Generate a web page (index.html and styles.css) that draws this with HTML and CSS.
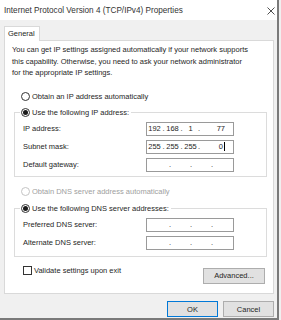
FILE: index.html
```html
<!DOCTYPE html>
<html>
<head>
<meta charset="utf-8">
<link rel="stylesheet" href="styles.css">
</head>
<body>
<div class="window">
  <div class="titlebar">
    <span class="title">Internet Protocol Version 4 (TCP/IPv4) Properties</span>
    <svg class="close" viewBox="0 0 8 8"><path d="M0.5 0.5 L7.5 7.5 M7.5 0.5 L0.5 7.5" stroke="#222" stroke-width="0.8" fill="none"/></svg>
  </div>
  <div class="main">
    <div class="tabs"><div class="tab">General</div></div>
    <div class="panel">
      <p class="intro">You can get IP settings assigned automatically if your network supports<br>this capability. Otherwise, you need to ask your network administrator<br>for the appropriate IP settings.</p>
      <div class="opt"><span class="radio"></span>Obtain an IP address automatically</div>
      <fieldset class="group">
        <legend><span class="leg"><span class="radio on"></span>Use the following IP address:</span></legend>
        <div class="rows">
          <span class="lbl">IP address:</span>
          <div class="ip"><span class="oct">192</span><span class="dot">.</span><span class="oct">168</span><span class="dot">.</span><span class="oct">1</span><span class="dot d3">.</span><span class="oct last">77</span></div>
          <span class="lbl">Subnet mask:</span>
          <div class="ip"><span class="oct">255</span><span class="dot">.</span><span class="oct">255</span><span class="dot">.</span><span class="oct">255</span><span class="dot d3">.</span><span class="oct last">0<span class="caret"></span></span></div>
          <span class="lbl">Default gateway:</span>
          <div class="ip blank"><span class="dot">.</span><span class="dot">.</span><span class="dot">.</span></div>
        </div>
      </fieldset>
      <div class="opt dns-opt disabled"><span class="radio"></span>Obtain DNS server address automatically</div>
      <fieldset class="group dns">
        <legend><span class="leg"><span class="radio on"></span>Use the following DNS server addresses:</span></legend>
        <div class="rows">
          <span class="lbl">Preferred DNS server:</span>
          <div class="ip blank"><span class="dot">.</span><span class="dot">.</span><span class="dot">.</span></div>
          <span class="lbl">Alternate DNS server:</span>
          <div class="ip blank"><span class="dot">.</span><span class="dot">.</span><span class="dot">.</span></div>
        </div>
      </fieldset>
      <div class="foot">
        <div class="check"><span class="box"></span>Validate settings upon exit</div>
        <button class="btn adv">Advanced...</button>
      </div>
    </div>
    <div class="actions">
      <button class="btn ok">OK</button>
      <button class="btn cancel">Cancel</button>
    </div>
  </div>
</div>
</body>
</html>
```
FILE: styles.css
```css
* { box-sizing: border-box; }
html, body { margin: 0; padding: 0; }
body {
  background: #f0f0f0;
  font-family: "Liberation Sans", Arial, sans-serif;
  font-size: 7.5px;
  color: #262626;
}
.window {
  width: 279px;
  height: 320px;
  background: #f0f0f0;
  border-right: 2px solid #7a7a7a;
  border-bottom: 2px solid #7a7a7a;
}
.titlebar {
  height: 20px;
  background: #fff;
  display: flex;
  align-items: center;
  justify-content: space-between;
  padding: 1px 2px 0 4px;
}
.title { font-size: 8.2px; color: #333; }
.close { width: 8px; height: 8px; display: block; }
.main { padding: 6px 3px 0 4px; }
.tabs { height: 14px; display: flex; }
.tab {
  position: relative;
  z-index: 1;
  width: 36px;
  height: 15px;
  background: #fff;
  border: 1px solid #d9d9d9;
  border-bottom: 0;
  padding-left: 3px;
  line-height: 13px;
}
.panel {
  height: 254px;
  background: #fff;
  border: 1px solid #d9d9d9;
}
.intro { margin: 3px 0 0 7px; line-height: 11.5px; }
.opt {
  margin: 12px 0 0 16px;
  display: flex;
  align-items: center;
  height: 12px;
}
.radio {
  flex: none;
  width: 9px;
  height: 9px;
  border: 1px solid #333;
  border-radius: 50%;
  margin-right: 2px;
  background: #fff;
}
.radio.on::after {
  content: "";
  display: block;
  width: 5px;
  height: 5px;
  margin: 1px;
  border-radius: 50%;
  background: #1a1a1a;
}
.disabled { color: #a0a0a0; }
.disabled .radio { border-color: #c4c4c4; }
.group {
  margin: 4px 0 0 9px;
  width: 253px;
  min-width: 0;
  border: 1px solid #dcdcdc;
  padding: 0 0 4px 0;
}
.group legend { margin-left: 5px; padding: 0 2px 0 1px; }
.leg { display: flex; align-items: center; height: 12px; }
.rows {
  display: grid;
  grid-template-columns: 123px 88px;
  row-gap: 4px;
  align-items: center;
  padding: 3px 0 0 8px;
}
.ip {
  height: 14px;
  border: 1px solid #9a9a9a;
  display: flex;
  align-items: center;
  padding-left: 1px;
  background: #fff;
}
.oct { width: 13px; text-align: center; }
.dot { width: 5px; text-align: center; }
.dot.d3 { width: 4px; }
.oct.last { width: 24px; text-align: right; }
.caret {
  display: inline-block;
  width: 1px;
  height: 9px;
  background: #000;
  margin-left: 1px;
  vertical-align: middle;
}
.ip.blank { padding-left: 22px; }
.ip.blank .dot { width: 2px; }
.ip.blank .dot + .dot { margin-left: 19px; }
.dns-opt { margin-top: 9px; }
.group.dns { margin-top: 5px; padding-bottom: 6px; }
.foot {
  display: flex;
  justify-content: space-between;
  align-items: flex-start;
  margin-top: 8px;
  padding-right: 8px;
}
.check {
  display: flex;
  align-items: center;
  height: 12px;
  margin-left: 18px;
}
.box {
  width: 9px;
  height: 9px;
  border: 1px solid #333;
  margin-right: 2px;
  background: #fff;
}
.btn {
  font: inherit;
  color: #262626;
  height: 16px;
  padding: 0;
  background: #e1e1e1;
  border: 1px solid #adadad;
}
.adv { width: 62px; margin-top: 3px; }
.actions {
  display: flex;
  justify-content: flex-end;
  gap: 5px;
  margin-top: 7px;
  padding-right: 0;
}
.ok { width: 51px; border-color: #0078d7; }
.cancel { width: 51px; }
```
